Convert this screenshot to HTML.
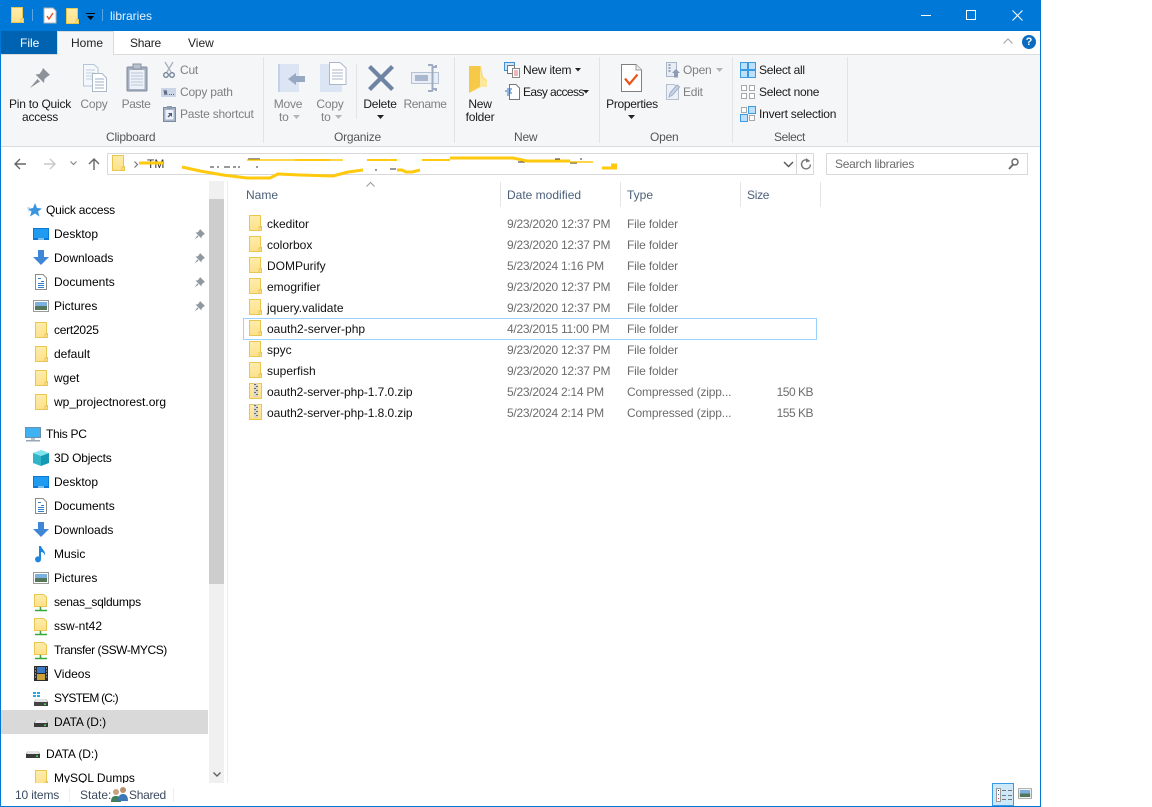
<!DOCTYPE html>
<html><head><meta charset="utf-8"><title>libraries</title>
<style>
html,body{margin:0;padding:0;background:#fff;width:1152px;height:807px;overflow:hidden}
body{position:relative;font-family:"Liberation Sans",sans-serif;font-size:12px;color:#000}
.t{position:absolute;white-space:nowrap;line-height:16px;font-size:12px}
.c{transform:translateX(-50%);text-align:center}
.g{color:#7f8080;letter-spacing:-.22px}.k{color:#1a1a1a;letter-spacing:-.22px}.l{color:#555;letter-spacing:-.22px}.d{color:#6d6d6d;letter-spacing:-.16px}.h{color:#4c607a}
.d[style*="left:507px"]{letter-spacing:-.27px}
.b{position:absolute}
svg.i{position:absolute;overflow:visible}
</style></head><body>
<svg width="0" height="0" style="position:absolute"><defs>
<linearGradient id="fg" x1="0" y1="0" x2="0" y2="1"><stop offset="0" stop-color="#ffedaa"/><stop offset="1" stop-color="#fde08a"/></linearGradient>
<symbol id="folder" viewBox="0 0 13 16"><path d="M.5.5H11.500V11.500H12.500V15.500H.5Z" fill="url(#fg)" stroke="#e9c64f"/><path d="M10 15.500V12H12.500" fill="none" stroke="#e9c64f"/></symbol>
<symbol id="zip" viewBox="0 0 13 16"><path d="M.5.5H12.500V15.500H.5Z" fill="url(#fg)" stroke="#e9c64f"/><rect x="5" y="0" width="4" height="14" fill="#d4d4d4"/><path d="M5 1.500h2M7 3.500h2M5 5.500h2M7 7.500h2M5 9.500h2M7 11.500h2" stroke="#6a6a6a"/></symbol>
<symbol id="net" viewBox="0 0 14 18"><path d="M.5.5H9.500L12.500 3V12.500H.5Z" fill="url(#fg)" stroke="#e9c64f"/><path d="M6.500 13V16M1 16.500H13" stroke="#39a83b" stroke-width="1.600"/></symbol>
<symbol id="pin" viewBox="0 0 11 11"><path d="M6 0L11 5 9.600 5.600 7.800 7.200 7.400 9.400 1.600 3.600 3.800 3.200 5.400 1.400Z M3.400 6.400L.6 10.400 4.600 7.600Z" fill="#8f979f"/></symbol>
<symbol id="desk" viewBox="0 0 16 12"><rect width="16" height="12" fill="#0a78d6"/><rect x="1" y="1" width="14" height="9" fill="#1f9cf0"/><rect x="5" y="10.500" width="6" height="1" fill="#fff"/></symbol>
<symbol id="down" viewBox="0 0 16 15"><path d="M5 0H11V7H16L8 15 0 7H5Z" fill="#3f86d6"/></symbol>
<symbol id="doc" viewBox="0 0 12 16"><path d="M.5.5H8L11.500 4V15.500H.5Z" fill="#fff" stroke="#8a8a8a"/><path d="M3 4.500H6M6 7.500H9M3 9.500H9M3 11.500H9M3 13.500H9" stroke="#2f7fc9"/></symbol>
<symbol id="pic" viewBox="0 0 16 12"><rect x=".5" y=".5" width="15" height="11" fill="#fff" stroke="#9a9a9a"/><rect x="2" y="2" width="12" height="4" fill="#7cb0de"/><rect x="2" y="6" width="12" height="4" fill="#54765a"/></symbol>
<symbol id="drive" viewBox="0 0 14 7"><path d="M2 0H12L14 3V7H0V3Z" fill="#3a3a3a"/><path d="M2 0H12L13.500 3H.5Z" fill="#e4e4e4"/><rect x="10" y="4.500" width="2" height="1.500" fill="#3fe04f"/></symbol>
</defs></svg>

<!-- window frame -->
<div class="b" style="left:0;top:0;width:1041px;height:31px;background:#0078d7"></div>
<div class="b" style="left:0;top:0;width:1px;height:807px;background:#0078d7"></div>
<div class="b" style="left:1040px;top:0;width:1px;height:807px;background:#0078d7"></div>
<div class="b" style="left:0;top:806px;width:1041px;height:1px;background:#0078d7"></div>

<!-- title bar -->
<svg class="i" style="left:11px;top:7px" width="13" height="16"><use href="#folder"/></svg>
<div class="b" style="left:32px;top:9px;width:1px;height:12px;background:#5aa7e3"></div>
<svg class="i" style="left:44px;top:8px" width="12" height="15" viewBox="0 0 12 15"><path d="M0 0H9L12 3V15H0Z" fill="#fff"/><path d="M3 8L5 11 9 5" fill="none" stroke="#e0512a" stroke-width="1.400"/><path d="M0 0H9L12 3V15H0Z" fill="none" stroke="#b5b5b5"/></svg>
<svg class="i" style="left:66px;top:8px" width="13" height="16"><use href="#folder"/></svg>
<svg class="i" style="left:86px;top:13px" width="9" height="8"><rect y="0" width="9" height="1" fill="#000"/><path d="M1 3H8L4.500 7Z" fill="#000"/></svg>
<div class="b" style="left:102px;top:9px;width:1px;height:12px;background:#5aa7e3"></div>
<div class="t" style="left:110px;top:8px;color:#e7f3fc">libraries</div>
<div class="b" style="left:921px;top:15px;width:10px;height:1px;background:#fff"></div>
<div class="b" style="left:966px;top:10px;width:8px;height:8px;border:1px solid #fff"></div>
<svg class="i" style="left:1012px;top:10px" width="11" height="11"><path d="M.5.5L10.500 10.500M10.500.5L.5 10.500" stroke="#fff"/></svg>

<!-- tabs -->
<div class="b" style="left:1px;top:31px;width:56px;height:23px;background:#0063b1"></div>
<div class="t" style="left:20px;top:35px;color:#fff">File</div>
<div class="b" style="left:57px;top:31px;width:57px;height:24px;background:#f5f6f7;border:1px solid #dadbdc;border-bottom:0;box-sizing:border-box;z-index:2"></div>
<div class="t" style="left:71px;top:35px;z-index:3;color:#222">Home</div>
<div class="t" style="left:130px;top:35px;color:#222;letter-spacing:-.2px">Share</div>
<div class="t" style="left:188px;top:35px;color:#222">View</div>
<div class="b" style="left:1px;top:54px;width:1039px;height:1px;background:#dadbdc"></div>
<svg class="i" style="left:1003px;top:38px" width="10" height="6"><path d="M.5 5.500L5 1 9.500 5.500" fill="none" stroke="#aaa" stroke-width="1.200"/></svg>
<div class="b" style="left:1022px;top:35px;width:14px;height:14px;border-radius:50%;background:#0a6cc0;color:#fff;font-weight:bold;font-size:11px;line-height:14px;text-align:center">?</div>

<!-- ribbon -->
<div class="b" style="left:1px;top:55px;width:1039px;height:91px;background:#f5f6f7"></div>
<div class="b" style="left:1px;top:146px;width:1039px;height:1px;background:#dadbdc"></div>
<div class="b" style="left:263px;top:57px;width:1px;height:86px;background:#e2e3e4"></div>
<div class="b" style="left:356px;top:64px;width:1px;height:55px;background:#e2e3e4"></div>
<div class="b" style="left:454px;top:57px;width:1px;height:86px;background:#e2e3e4"></div>
<div class="b" style="left:599px;top:57px;width:1px;height:86px;background:#e2e3e4"></div>
<div class="b" style="left:732px;top:57px;width:1px;height:86px;background:#e2e3e4"></div>
<div class="b" style="left:847px;top:57px;width:1px;height:86px;background:#e2e3e4"></div>

<!-- Clipboard -->
<svg class="i" style="left:30px;top:68px" width="21" height="21" viewBox="0 0 21 21"><path d="M13 0L20 7 18 8 14.500 11 14 15 5.500 6.500 9.500 6 12 2.500Z M7.500 11L0 20 10 13.500Z" fill="#8b9299"/></svg>
<div class="t c k" style="left:40px;top:96px">Pin to Quick</div>
<div class="t c k" style="left:40px;top:109px">access</div>
<svg class="i" style="left:83px;top:64px" width="24" height="28" viewBox="0 0 24 28"><path d="M.5.5H11L15 4V22H.5Z" fill="#f4f7fb" stroke="#b7c5d8"/><path d="M3 6H12M3 9H12M3 12H12M3 15H12" stroke="#c5d0de"/><path d="M9.500 9.500H19L23.500 14V27.500H9.500Z" fill="#fff" stroke="#aab8cc"/><path d="M12 15H21M12 18H21M12 21H21M12 24H21" stroke="#9fb0c6"/></svg>
<div class="t c g" style="left:94px;top:96px">Copy</div>
<svg class="i" style="left:126px;top:63px" width="22" height="29" viewBox="0 0 22 29"><rect x="1" y="4" width="20" height="24" rx="1" fill="#a4afbf" stroke="#7f8ba0"/><rect x="3.500" y="7" width="15" height="19" fill="#eef2f8"/><path d="M5 10H17M5 13H17M5 16H17M5 19H17M5 22H17" stroke="#b9c5d6"/><rect x="7" y="1" width="8" height="5" fill="#b9c0cc" stroke="#8a93a3"/></svg>
<div class="t c g" style="left:136px;top:96px;letter-spacing:-.4px">Paste</div>
<svg class="i" style="left:163px;top:62px" width="12" height="16" viewBox="0 0 12 16"><path d="M2 0L8 10M10 0L4 10" stroke="#a7b1bf" stroke-width="1.300"/><circle cx="3" cy="13" r="2.300" fill="none" stroke="#6e7f96" stroke-width="1.300"/><circle cx="9" cy="13" r="2.300" fill="none" stroke="#6e7f96" stroke-width="1.300"/></svg>
<div class="t g" style="left:180px;top:62px">Cut</div>
<svg class="i" style="left:161px;top:88px" width="15" height="9" viewBox="0 0 15 9"><rect width="15" height="9" fill="#ccd6e6"/><path d="M3 2L4 7 5 2 6 7M8 6.500H9M10 6.500H11M12 6.500H13" stroke="#55617a" fill="none"/></svg>
<div class="t g" style="left:180px;top:84px">Copy path</div>
<svg class="i" style="left:163px;top:106px" width="13" height="16" viewBox="0 0 13 16"><rect x=".5" y="1.500" width="12" height="14" fill="#a6b4c8" stroke="#7a8aa0"/><rect x="2.500" y="4" width="8" height="9.500" fill="#eef2f8"/><rect x="4" y="0" width="5" height="3" fill="#8f9bae"/><path d="M5 7H9V11L7.500 9.500 5.500 11.500 4.500 10.500 6.500 8.500Z" fill="#4d5d78"/></svg>
<div class="t g" style="left:180px;top:106px">Paste shortcut</div>
<div class="t l" style="left:106px;top:129px">Clipboard</div>

<!-- Organize -->
<svg class="i" style="left:278px;top:64px" width="27" height="30" viewBox="0 0 27 30"><rect width="21" height="28" fill="#dbe5f3"/><rect x="0" width="2" height="28" fill="#c4d2e6"/><path d="M10 15L18 9V12H27V18H18V21Z" fill="#97a8c2"/></svg>
<div class="t c g" style="left:288px;top:96px">Move</div>
<div class="t g" style="left:279px;top:109px">to</div>
<svg class="i" style="left:293px;top:115px" width="7" height="4"><path d="M0 0H7L3.500 4Z" fill="#b5b5b5"/></svg>
<svg class="i" style="left:320px;top:62px" width="27" height="30" viewBox="0 0 27 30"><rect y="2" width="22" height="28" fill="#dbe5f3"/><path d="M9.500.5H20L26 6V22.500H9.500Z" fill="#fff" stroke="#aab8cc"/><path d="M12 8H23M12 11H23M12 14H23M12 17H23" stroke="#a8b7cb"/></svg>
<div class="t c g" style="left:330px;top:96px">Copy</div>
<div class="t g" style="left:321px;top:109px">to</div>
<svg class="i" style="left:335px;top:115px" width="7" height="4"><path d="M0 0H7L3.500 4Z" fill="#b5b5b5"/></svg>
<svg class="i" style="left:368px;top:65px" width="26" height="26" viewBox="0 0 26 26"><path d="M3 0L13 10 23 0 26 3 16 13 26 23 23 26 13 16 3 26 0 23 10 13 0 3Z" fill="#6f84a3"/></svg>
<div class="t c k" style="left:380px;top:96px">Delete</div>
<svg class="i" style="left:377px;top:115px" width="7" height="4"><path d="M0 0H7L3.500 4Z" fill="#222"/></svg>
<svg class="i" style="left:411px;top:64px" width="29" height="28" viewBox="0 0 29 28"><rect x=".5" y="8.500" width="27" height="11" fill="#e9eef6" stroke="#b4c2d6"/><rect x="4" y="11" width="13" height="6" fill="#a9b8cf"/><path d="M17 1H21L22 3H25V1M21.500 3V25M17 27H21L22 25H25V27" fill="none" stroke="#9eacc2" stroke-width="2"/></svg>
<div class="t c g" style="left:425px;top:96px;letter-spacing:-.4px">Rename</div>
<div class="t l" style="left:334px;top:129px">Organize</div>

<!-- New -->
<svg class="i" style="left:468px;top:65px" width="20" height="29" viewBox="0 0 20 29"><path d="M1 1H13L15 12 19 15V22H13L1 28Z" fill="#fbd868"/><path d="M1 1H12V21L1 28Z" fill="#f6c948"/><path d="M12 3L14 13 19 16V22H12Z" fill="#fde79d"/></svg>
<div class="t c k" style="left:480px;top:96px">New</div>
<div class="t c k" style="left:480px;top:109px">folder</div>
<svg class="i" style="left:504px;top:62px" width="16" height="16" viewBox="0 0 16 16"><rect x=".5" y=".5" width="10" height="8" fill="#cfe6fa" stroke="#3f8fd8"/><rect x="3.500" y="3.500" width="7" height="8" fill="#fff" stroke="#777"/><rect x="8.500" y="6.500" width="7" height="9" fill="#fff" stroke="#888"/><path d="M10 9H14M10 11H14M10 13H14" stroke="#d87070"/></svg>
<div class="t k" style="left:523px;top:62px">New item</div>
<svg class="i" style="left:575px;top:68px" width="6" height="4"><path d="M0 0H6L3 3.500Z" fill="#222"/></svg>
<svg class="i" style="left:505px;top:84px" width="15" height="16" viewBox="0 0 15 16"><path d="M4.500.5H11L14.500 4V15.500H4.500Z" fill="#fff" stroke="#777"/><path d="M2 5H7M0 7H6M2 9H7M2 11H4" stroke="#2a6fc0"/></svg>
<div class="t k" style="left:523px;top:84px;letter-spacing:-.6px">Easy access</div>
<svg class="i" style="left:583px;top:90px" width="6" height="4"><path d="M0 0H6L3 3.500Z" fill="#222"/></svg>
<div class="t l" style="left:514px;top:129px">New</div>

<!-- Open -->
<svg class="i" style="left:621px;top:64px" width="21" height="28" viewBox="0 0 21 28"><path d="M.5.500H15L20.500 6V27.500H.5Z" fill="#fff" stroke="#7f7f7f"/><path d="M15 .5V6H20.500" fill="#eee" stroke="#9a9a9a"/><path d="M4 14.500L8.500 20 16.500 10.500" fill="none" stroke="#e8551c" stroke-width="2.200"/></svg>
<div class="t c k" style="left:632px;top:96px;letter-spacing:-.3px">Properties</div>
<svg class="i" style="left:628px;top:115px" width="7" height="4"><path d="M0 0H7L3.500 4Z" fill="#222"/></svg>
<svg class="i" style="left:666px;top:62px" width="15" height="16" viewBox="0 0 15 16"><rect x=".5" y=".5" width="10" height="14" fill="#e8edf5" stroke="#a9b5c6"/><path d="M2.500 3H4.500M2.500 6H4.500M2.500 9H4.500" stroke="#7e8ca3" stroke-width="1.500"/><path d="M10 7L14 11H12V15.500H8V11H6Z" fill="#8b9cb4"/></svg>
<div class="t g" style="left:683px;top:62px">Open</div>
<svg class="i" style="left:716px;top:68px" width="7" height="4"><path d="M0 0H7L3.500 4Z" fill="#b5b5b5"/></svg>
<svg class="i" style="left:666px;top:84px" width="14" height="16" viewBox="0 0 14 16"><path d="M.5.5H8L12.500 5V15.500H.5Z" fill="#edf1f7" stroke="#b4c0d1"/><path d="M3 13L4 9 11 1 13.500 3 6.500 11Z" fill="#c7d3e4" stroke="#9fb0c7"/></svg>
<div class="t g" style="left:683px;top:84px">Edit</div>
<div class="t l" style="left:650px;top:129px">Open</div>

<!-- Select -->
<svg class="i" style="left:740px;top:62px" width="16" height="16" viewBox="0 0 16 16"><rect width="16" height="16" fill="#3a9ae4"/><rect x="1" y="1" width="6" height="6" fill="#bfe0fa"/><rect x="9" y="1" width="6" height="6" fill="#bfe0fa"/><rect x="1" y="9" width="6" height="6" fill="#bfe0fa"/><rect x="9" y="9" width="6" height="6" fill="#bfe0fa"/></svg>
<div class="t k" style="left:759px;top:62px;letter-spacing:-.3px">Select all</div>
<svg class="i" style="left:741px;top:85px" width="14" height="14" viewBox="0 0 14 14"><g fill="#fff" stroke="#a8a8a8"><rect x=".5" y=".5" width="5" height="5"/><rect x="8.500" y=".5" width="5" height="5"/><rect x=".5" y="8.500" width="5" height="5"/><rect x="8.500" y="8.500" width="5" height="5"/></g></svg>
<div class="t k" style="left:759px;top:84px;letter-spacing:-.3px">Select none</div>
<svg class="i" style="left:740px;top:106px" width="16" height="16" viewBox="0 0 16 16"><rect x="1.500" y="1.500" width="5" height="5" fill="#fff" stroke="#a8a8a8"/><rect x="9.500" y="9.500" width="5" height="5" fill="#fff" stroke="#a8a8a8"/><rect x="8.500" y=".5" width="7" height="7" fill="#bfe0fa" stroke="#3a9ae4"/><rect x=".5" y="8.500" width="7" height="7" fill="#bfe0fa" stroke="#3a9ae4"/></svg>
<div class="t k" style="left:759px;top:106px">Invert selection</div>
<div class="t l" style="left:774px;top:129px;letter-spacing:-.4px">Select</div>

<!-- nav -->
<svg class="i" style="left:14px;top:158px" width="12" height="12" viewBox="0 0 12 12"><path d="M6 1L1 6 6 11M1 6H12" fill="none" stroke="#666" stroke-width="1.400"/></svg>
<svg class="i" style="left:44px;top:158px" width="12" height="12" viewBox="0 0 12 12"><path d="M6 1L11 6 6 11M11 6H0" fill="none" stroke="#c8c8c8" stroke-width="1.400"/></svg>
<svg class="i" style="left:70px;top:161px" width="7" height="5" viewBox="0 0 7 5"><path d="M.5.5L3.500 3.500 6.500.5" fill="none" stroke="#888" stroke-width="1.200"/></svg>
<svg class="i" style="left:88px;top:158px" width="12" height="12" viewBox="0 0 12 12"><path d="M1 6L6 1 11 6M6 1V12" fill="none" stroke="#666" stroke-width="1.400"/></svg>
<div class="b" style="left:107px;top:153px;width:707px;height:22px;border:1px solid #d9d9d9;box-sizing:border-box;background:#fff"></div>
<svg class="i" style="left:112px;top:155px" width="13" height="16"><use href="#folder"/></svg>
<svg class="i" style="left:134px;top:161px" width="4" height="7" viewBox="0 0 4 7"><path d="M.5.5L3.500 3.500.5 6.500" fill="none" stroke="#777" stroke-width="1.200"/></svg>
<div class="t" style="left:147px;top:156px;color:#333">TM</div>
<svg class="i" style="left:0;top:0" width="1152" height="200" viewBox="0 0 1152 200">
<g stroke="#333" fill="none"><path d="M210 167h4M217 167h2M224 167h6M233 167h3M238 167h2M248 159h12M257 166v2M375 170h2M390 169h6M518 162h7M555 159h5M570 163h7M580 159h2"/></g>
<g fill="none" stroke="#ffc90e" stroke-linejoin="round">
<path d="M139 163H163" stroke-width="3"/>
<path d="M182 167L200 171 223 175 247 178H270L278 174 300 175 333 176 348 172 363 170" stroke-width="3"/>
<path d="M247 160H343" stroke-width="1.500"/><path d="M295 160H330" stroke-width="2"/>
<path d="M367 160H397" stroke-width="2"/>
<path d="M422 160H450" stroke-width="2"/><path d="M450 158H513L527 161H570" stroke-width="3"/><path d="M570 162H593" stroke-width="1.500"/>
<path d="M360 170H363" stroke-width="2"/>
<path d="M397 170H402L406 172H412L420 170" stroke-width="3"/>
<path d="M602 168H617M611 165H617" stroke-width="3"/>
</g></svg>
<svg class="i" style="left:783px;top:161px" width="11" height="7" viewBox="0 0 11 7"><path d="M1 1L5.500 5.500 10 1" fill="none" stroke="#555" stroke-width="1.400"/></svg>
<div class="b" style="left:796px;top:153px;width:1px;height:22px;background:#d9d9d9"></div>
<svg class="i" style="left:800px;top:158px" width="12" height="12" viewBox="0 0 12 12"><path d="M9.500 3.500A4.500 4.500 0 1 0 10.500 6.500" fill="none" stroke="#777" stroke-width="1.400"/><path d="M6 0L10 3 6 4.500Z" fill="#777"/></svg>
<div class="b" style="left:826px;top:153px;width:202px;height:22px;border:1px solid #d9d9d9;box-sizing:border-box;background:#fff"></div>
<div class="t" style="left:835px;top:156px;color:#6d6d6d;letter-spacing:-.27px">Search libraries</div>
<svg class="i" style="left:1008px;top:158px" width="11" height="12" viewBox="0 0 11 12"><circle cx="7" cy="4" r="3" fill="none" stroke="#666" stroke-width="1.400"/><path d="M5 6.500L1 11" stroke="#666" stroke-width="1.800"/></svg>

<!-- sidebar -->
<div class="b" style="left:1px;top:710px;width:207px;height:24px;background:#d9d9d9"></div>
<div class="b" style="left:209px;top:181px;width:15px;height:602px;background:#f0f0f0"></div>
<div class="b" style="left:209px;top:199px;width:15px;height:385px;background:#cdcdcd"></div>
<svg class="i" style="left:213px;top:772px" width="8" height="5" viewBox="0 0 8 5"><path d="M.5.5L4 4 7.500.5" fill="none" stroke="#606060" stroke-width="1.400"/></svg>
<div class="b" style="left:227px;top:181px;width:1px;height:602px;background:#ececec"></div>

<svg class="i" style="left:27px;top:203px" width="15" height="14" viewBox="0 0 15 14"><path d="M8 0L10 5 15 5.500 11 8.500 12.500 13.500 8 10.500 3 13.500 4.500 8.500 1 6 6 5Z" fill="#3a95e0"/><path d="M0 5H3M1 8H3" stroke="#9ccaf0"/></svg>
<div class="t" style="left:46px;top:202px;letter-spacing:-.2px">Quick access</div>
<svg class="i" style="left:33px;top:228px" width="16" height="12"><use href="#desk"/></svg><div class="t" style="left:54px;top:226px">Desktop</div>
<svg class="i" style="left:33px;top:250px" width="16" height="15"><use href="#down"/></svg><div class="t" style="left:54px;top:250px">Downloads</div>
<svg class="i" style="left:35px;top:274px" width="12" height="16"><use href="#doc"/></svg><div class="t" style="left:54px;top:274px">Documents</div>
<svg class="i" style="left:33px;top:300px" width="16" height="12"><use href="#pic"/></svg><div class="t" style="left:54px;top:298px">Pictures</div>
<svg class="i" style="left:194px;top:229px" width="11" height="11"><use href="#pin"/></svg>
<svg class="i" style="left:194px;top:253px" width="11" height="11"><use href="#pin"/></svg>
<svg class="i" style="left:194px;top:277px" width="11" height="11"><use href="#pin"/></svg>
<svg class="i" style="left:194px;top:301px" width="11" height="11"><use href="#pin"/></svg>
<svg class="i" style="left:35px;top:322px" width="13" height="16"><use href="#folder"/></svg><div class="t" style="left:54px;top:322px;letter-spacing:-.25px">cert2025</div>
<svg class="i" style="left:35px;top:346px" width="13" height="16"><use href="#folder"/></svg><div class="t" style="left:54px;top:346px">default</div>
<svg class="i" style="left:35px;top:370px" width="13" height="16"><use href="#folder"/></svg><div class="t" style="left:54px;top:370px">wget</div>
<svg class="i" style="left:35px;top:394px" width="13" height="16"><use href="#folder"/></svg><div class="t" style="left:54px;top:394px">wp_projectnorest.org</div>

<svg class="i" style="left:25px;top:427px" width="16" height="15" viewBox="0 0 16 15"><rect x=".5" y=".5" width="15" height="10" fill="#3fb2f2" stroke="#6a8fb0"/><rect x="6" y="11" width="4" height="2" fill="#b8c4cf"/><rect x="1" y="13" width="14" height="1.500" fill="#9aa6b2"/></svg>
<div class="t" style="left:46px;top:426px;letter-spacing:-.3px">This PC</div>
<svg class="i" style="left:33px;top:450px" width="16" height="16" viewBox="0 0 16 16"><path d="M8 0L16 3 8 6 0 3Z" fill="#7fe4ee"/><path d="M0 3L8 6V16L0 13Z" fill="#2fb4c8"/><path d="M16 3L8 6V16L16 13Z" fill="#149ab5"/></svg><div class="t" style="left:54px;top:450px;letter-spacing:-.18px">3D Objects</div>
<svg class="i" style="left:33px;top:476px" width="16" height="12"><use href="#desk"/></svg><div class="t" style="left:54px;top:474px">Desktop</div>
<svg class="i" style="left:35px;top:498px" width="12" height="16"><use href="#doc"/></svg><div class="t" style="left:54px;top:498px">Documents</div>
<svg class="i" style="left:33px;top:522px" width="16" height="15"><use href="#down"/></svg><div class="t" style="left:54px;top:522px">Downloads</div>
<svg class="i" style="left:35px;top:546px" width="12" height="16" viewBox="0 0 12 16"><path d="M4 0H6C6.500 3 11 5 10 10 9.500 7 7.500 6 6 6V13A3 3 0 1 1 4 10.500Z" fill="#1f86de"/></svg><div class="t" style="left:54px;top:546px">Music</div>
<svg class="i" style="left:33px;top:572px" width="16" height="12"><use href="#pic"/></svg><div class="t" style="left:54px;top:570px">Pictures</div>
<svg class="i" style="left:34px;top:594px" width="14" height="18"><use href="#net"/></svg><div class="t" style="left:54px;top:594px;letter-spacing:-.23px">senas_sqldumps</div>
<svg class="i" style="left:34px;top:618px" width="14" height="18"><use href="#net"/></svg><div class="t" style="left:54px;top:618px">ssw-nt42</div>
<svg class="i" style="left:34px;top:642px" width="14" height="18"><use href="#net"/></svg><div class="t" style="left:54px;top:642px;letter-spacing:-.45px">Transfer (SSW-MYCS)</div>
<svg class="i" style="left:34px;top:666px" width="14" height="15" viewBox="0 0 14 15"><rect width="14" height="15" fill="#2b2b2b"/><rect x="3" y="1" width="8" height="6" fill="#3a78c8"/><rect x="3" y="8" width="8" height="6" fill="#c9a23a"/><path d="M1 2H2M1 5H2M1 8H2M1 11H2M12 2H13M12 5H13M12 8H13M12 11H13" stroke="#ddd"/></svg><div class="t" style="left:54px;top:666px">Videos</div>
<svg class="i" style="left:33px;top:692px" width="16" height="14" viewBox="0 0 16 14"><path d="M0 0H3V2H0ZM4 0H7V2H4ZM0 3H3V5H0ZM4 3H7V5H4Z" fill="#22aaf0"/><path d="M3 7H13L15 10V14H1V10Z" fill="#444"/><path d="M3 7H13L14.500 10H1.500Z" fill="#e4e4e4"/><rect x="11" y="11.500" width="2" height="1.500" fill="#3fe04f"/></svg><div class="t" style="left:54px;top:690px;letter-spacing:-.8px">SYSTEM (C:)</div>
<svg class="i" style="left:34px;top:720px" width="14" height="7"><use href="#drive"/></svg><div class="t" style="left:54px;top:714px;letter-spacing:-.1px">DATA (D:)</div>
<svg class="i" style="left:26px;top:751px" width="14" height="7"><use href="#drive"/></svg><div class="t" style="left:46px;top:746px;letter-spacing:-.1px">DATA (D:)</div>
<div class="b" style="left:0;top:768px;width:208px;height:15px;overflow:hidden">
<svg class="i" style="left:35px;top:2px" width="13" height="16"><use href="#folder"/></svg><div class="t" style="left:54px;top:2px">MySQL Dumps</div></div>

<!-- headers -->
<svg class="i" style="left:366px;top:182px" width="9" height="5" viewBox="0 0 9 5"><path d="M.5 4.500L4.500.5 8.500 4.500" fill="none" stroke="#999"/></svg>
<div class="t h" style="left:246px;top:187px">Name</div>
<div class="t h" style="left:507px;top:187px">Date modified</div>
<div class="t h" style="left:627px;top:187px">Type</div>
<div class="t h" style="left:747px;top:187px;letter-spacing:-.3px">Size</div>
<div class="b" style="left:500px;top:182px;width:1px;height:25px;background:#e5e5e5"></div>
<div class="b" style="left:620px;top:182px;width:1px;height:25px;background:#e5e5e5"></div>
<div class="b" style="left:740px;top:182px;width:1px;height:25px;background:#e5e5e5"></div>
<div class="b" style="left:820px;top:182px;width:1px;height:25px;background:#e5e5e5"></div>

<!-- rows -->
<div class="b" style="left:243px;top:318px;width:574px;height:22px;border:1px solid #99d1ff;box-sizing:border-box"></div>
<svg class="i" style="left:249px;top:215px" width="13" height="16"><use href="#folder"/></svg><div class="t" style="left:267px;top:216px;color:#111">ckeditor</div><div class="t d" style="left:507px;top:216px">9/23/2020 12:37 PM</div><div class="t d" style="left:627px;top:216px">File folder</div>
<svg class="i" style="left:249px;top:236px" width="13" height="16"><use href="#folder"/></svg><div class="t" style="left:267px;top:237px;color:#111">colorbox</div><div class="t d" style="left:507px;top:237px">9/23/2020 12:37 PM</div><div class="t d" style="left:627px;top:237px">File folder</div>
<svg class="i" style="left:249px;top:257px" width="13" height="16"><use href="#folder"/></svg><div class="t" style="left:267px;top:258px;color:#111">DOMPurify</div><div class="t d" style="left:507px;top:258px">5/23/2024 1:16 PM</div><div class="t d" style="left:627px;top:258px">File folder</div>
<svg class="i" style="left:249px;top:278px" width="13" height="16"><use href="#folder"/></svg><div class="t" style="left:267px;top:279px;color:#111">emogrifier</div><div class="t d" style="left:507px;top:279px">9/23/2020 12:37 PM</div><div class="t d" style="left:627px;top:279px">File folder</div>
<svg class="i" style="left:249px;top:299px" width="13" height="16"><use href="#folder"/></svg><div class="t" style="left:267px;top:300px;color:#111">jquery.validate</div><div class="t d" style="left:507px;top:300px">9/23/2020 12:37 PM</div><div class="t d" style="left:627px;top:300px">File folder</div>
<svg class="i" style="left:249px;top:320px" width="13" height="16"><use href="#folder"/></svg><div class="t" style="left:267px;top:321px;color:#111">oauth2-server-php</div><div class="t d" style="left:507px;top:321px">4/23/2015 11:00 PM</div><div class="t d" style="left:627px;top:321px">File folder</div>
<svg class="i" style="left:249px;top:341px" width="13" height="16"><use href="#folder"/></svg><div class="t" style="left:267px;top:342px;color:#111">spyc</div><div class="t d" style="left:507px;top:342px">9/23/2020 12:37 PM</div><div class="t d" style="left:627px;top:342px">File folder</div>
<svg class="i" style="left:249px;top:362px" width="13" height="16"><use href="#folder"/></svg><div class="t" style="left:267px;top:363px;color:#111">superfish</div><div class="t d" style="left:507px;top:363px">9/23/2020 12:37 PM</div><div class="t d" style="left:627px;top:363px">File folder</div>
<svg class="i" style="left:249px;top:383px" width="13" height="16"><use href="#zip"/></svg><div class="t" style="left:267px;top:384px;color:#111;letter-spacing:-.07px">oauth2-server-php-1.7.0.zip</div><div class="t d" style="left:507px;top:384px">5/23/2024 2:14 PM</div><div class="t d" style="left:627px;top:384px">Compressed (zipp...</div><div class="t d" style="right:339px;top:384px;letter-spacing:-.5px">150 KB</div>
<svg class="i" style="left:249px;top:404px" width="13" height="16"><use href="#zip"/></svg><div class="t" style="left:267px;top:405px;color:#111;letter-spacing:-.07px">oauth2-server-php-1.8.0.zip</div><div class="t d" style="left:507px;top:405px">5/23/2024 2:14 PM</div><div class="t d" style="left:627px;top:405px">Compressed (zipp...</div><div class="t d" style="right:339px;top:405px;letter-spacing:-.5px">155 KB</div>

<!-- status -->
<div class="t" style="left:15px;top:787px;color:#3c4a60;letter-spacing:-.15px">10 items</div>
<div class="b" style="left:69px;top:788px;width:1px;height:14px;background:#eee"></div>
<div class="t" style="left:80px;top:787px;color:#3c4a60">State:</div>
<svg class="i" style="left:111px;top:786px" width="17" height="17" viewBox="0 0 17 17"><circle cx="5" cy="6" r="3" fill="#c9a27e"/><path d="M0 16C0 11 2 10 5 10S10 11 10 16Z" fill="#3f7f5f"/><circle cx="12" cy="4" r="3" fill="#b89070"/><path d="M7 15C7 10 9 8 12 8S17 10 17 15Z" fill="#3c78b8"/></svg>
<div class="t" style="left:129px;top:787px;color:#3c4a60;letter-spacing:-.3px">Shared</div>
<div class="b" style="left:173px;top:788px;width:1px;height:14px;background:#eee"></div>
<div class="b" style="left:992px;top:783px;width:22px;height:23px;background:#cce8f9;border:1px solid #3a9ae4;box-sizing:border-box"></div>
<svg class="i" style="left:996px;top:788px" width="17" height="14" viewBox="0 0 17 14"><rect x=".5" y=".5" width="4" height="13" fill="#fff" stroke="#9a9a9a"/><path d="M6 2.500H10M12 2.500H16M6 7.500H10M12 7.500H16M6 11.500H10M12 11.500H16" stroke="#777"/><rect x="2" y="2" width="1" height="1" fill="#444"/><rect x="2" y="6" width="1" height="1" fill="#3a78d8"/><rect x="2" y="10" width="1" height="1" fill="#d83a3a"/></svg>
<svg class="i" style="left:1018px;top:788px" width="14" height="11"><use href="#pic"/></svg>
</body></html>
